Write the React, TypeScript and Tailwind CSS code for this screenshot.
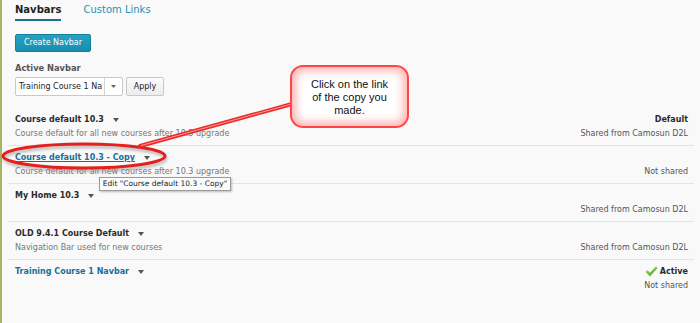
import React from "react";

const Arrow = () => (
  <svg width="6" height="4" viewBox="0 0 6 4" className="ml-[9px] mt-[1px]">
    <path d="M0 0 L6 0 L3 4 Z" fill="#555" />
  </svg>
);

const Check = () => (
  <svg width="13" height="11" viewBox="0 0 13 11" className="mr-[2px]">
    <defs>
      <linearGradient id="cg" x1="0" y1="0" x2="1" y2="1">
        <stop offset="0" stopColor="#a6d86a" />
        <stop offset="1" stopColor="#4f9a22" />
      </linearGradient>
    </defs>
    <path d="M0.5 6 L2.5 4.2 L5 6.6 L11 0.5 L12.5 2 L5 10.5 Z" fill="url(#cg)" />
  </svg>
);

type Row = {
  title: string;
  kind: "dark" | "link" | "linkU";
  desc?: string;
  rightTop?: "Default" | "Active";
  rightBottom: string;
  last?: boolean;
};

const rows: Row[] = [
  {
    title: "Course default 10.3",
    kind: "dark",
    desc: "Course default for all new courses after 10.3 upgrade",
    rightTop: "Default",
    rightBottom: "Shared from Camosun D2L",
  },
  {
    title: "Course default 10.3 - Copy",
    kind: "linkU",
    desc: "Course default for all new courses after 10.3 upgrade",
    rightBottom: "Not shared",
  },
  {
    title: "My Home 10.3",
    kind: "dark",
    rightBottom: "Shared from Camosun D2L",
  },
  {
    title: "OLD 9.4.1 Course Default",
    kind: "dark",
    desc: "Navigation Bar used for new courses",
    rightBottom: "Shared from Camosun D2L",
  },
  {
    title: "Training Course 1 Navbar",
    kind: "link",
    rightTop: "Active",
    rightBottom: "Not shared",
    last: true,
  },
];

export default function App() {
  return (
    <div className="relative w-[700px] h-[323px] overflow-hidden bg-[#f9f9f9] flex font-['DejaVu_Sans',Verdana,sans-serif]">
      <div className="w-[2px] h-full bg-[#a5b65f] shrink-0" />
      <div className="flex-1 flex flex-col">
        {/* Tabs */}
        <div className="flex pl-[13px] gap-[22px] text-[10px]">
          <div className="pt-[3px] pb-[2px] leading-[14px] font-bold text-[#222] border-b-2 border-[#1c6f8f]">
            Navbars
          </div>
          <div className="pt-[3px] pb-[2px] leading-[14px] text-[#2a90b5] border-b-2 border-transparent">
            Custom Links
          </div>
        </div>

        {/* Create button */}
        <div className="pl-[13px] mt-[13px]">
          <div className="w-[76px] h-[18px] flex items-center justify-center rounded-[2px] bg-gradient-to-b from-[#25a2c2] to-[#178eb0] border border-[#157f9e] text-white text-[8px]">
            Create Navbar
          </div>
        </div>

        {/* Active Navbar */}
        <div className="pl-[13px] mt-[10px] text-[8.3px] leading-[12px] font-bold text-[#555]">
          Active Navbar
        </div>
        <div className="pl-[13px] mt-[3px] flex gap-[3px]">
          <div className="w-[108px] h-[19px] flex bg-white border border-[#c8c8c8] rounded-[2px]">
            <div className="flex-1 flex items-center pl-[3px] overflow-hidden whitespace-nowrap text-[8px] text-[#222]">
              Training Course 1 Na
            </div>
            <div className="w-[18px] border-l border-[#d4d4d4] flex items-center justify-center">
              <svg width="5" height="3" viewBox="0 0 5 3">
                <path d="M0 0 L5 0 L2.5 3 Z" fill="#666" />
              </svg>
            </div>
          </div>
          <div className="w-[38px] h-[19px] flex items-center justify-center bg-gradient-to-b from-[#fbfbfb] to-[#ececec] border border-[#c8c8c8] rounded-[2px] text-[8px] text-[#222]">
            Apply
          </div>
        </div>

        {/* List */}
        <div className="mt-[12px] ml-[6px] mr-[6px] flex flex-col">
          {rows.map((r, i) => (
            <div
              key={i}
              className={`flex justify-between pl-[7px] pr-[6px] pt-[5px] pb-[5px] ${
                r.last ? "" : "border-b border-[#e4e4e4]"
              }`}
            >
              <div className="flex flex-col gap-[2px]">
                <div className="flex items-center h-[13px]">
                  <span
                    className={`text-[8px] font-bold leading-[13px] whitespace-nowrap ${
                      r.kind === "dark"
                        ? "text-[#2b2b2b]"
                        : r.kind === "linkU"
                        ? "text-[#1a6f98] underline"
                        : "text-[#1a6f98]"
                    }`}
                  >
                    {r.title}
                  </span>
                  <Arrow />
                </div>
                <div className="h-[12px] text-[8px] leading-[12px] text-[#767676] whitespace-nowrap">
                  {r.desc ?? ""}
                </div>
              </div>
              <div className="flex flex-col items-end gap-[2px]">
                <div className="h-[13px] flex items-center text-[8px] font-bold text-[#2b2b2b]">
                  {r.rightTop === "Active" && <Check />}
                  {r.rightTop ?? ""}
                </div>
                <div className="h-[12px] text-[8px] leading-[12px] text-[#555] whitespace-nowrap">
                  {r.rightBottom}
                </div>
              </div>
            </div>
          ))}
        </div>
      </div>

      {/* Tooltip */}
      <div className="absolute left-[99px] top-[177px] w-[132px] h-[14px] flex items-center justify-center bg-[#fbfbfb] border border-[#9a9a9a] shadow-[1px_1px_2px_rgba(0,0,0,0.25)] text-[7.5px] text-[#222] whitespace-nowrap">
        Edit "Course default 10.3 - Copy"
      </div>

      {/* Annotation drawings */}
      <svg
        className="absolute left-0 top-0 pointer-events-none"
        width="700"
        height="323"
        viewBox="0 0 700 323"
      >
        <defs>
          <filter id="blur" x="-10%" y="-50%" width="120%" height="200%">
            <feGaussianBlur stdDeviation="1.5" />
          </filter>
        </defs>
        <ellipse cx="85" cy="158.5" rx="81" ry="12" fill="none" stroke="#888" strokeOpacity="0.6" strokeWidth="3" filter="url(#blur)" />
        <ellipse cx="84" cy="156" rx="81" ry="12" fill="none" stroke="#e5201c" strokeWidth="3" />
        <line x1="140" y1="146" x2="292" y2="104" stroke="#ec2b2b" strokeWidth="4" strokeLinecap="round" />
        <line x1="141" y1="145.6" x2="291" y2="104.2" stroke="#ff9a9a" strokeWidth="1" />
      </svg>

      {/* Callout */}
      <div className="absolute left-[290px] top-[65px] w-[119px] h-[63px] rounded-[13px] border-2 border-[#ff4545] bg-white shadow-[inset_0_0_9px_4px_#ffb3b3] flex items-center justify-center pt-[2px]">
        <div className="text-center text-[11px] leading-[13px] text-[#111] font-['Liberation_Sans',Arial,sans-serif]">
          Click on the link
          <br />
          of the copy you
          <br />
          made.
        </div>
      </div>
    </div>
  );
}
